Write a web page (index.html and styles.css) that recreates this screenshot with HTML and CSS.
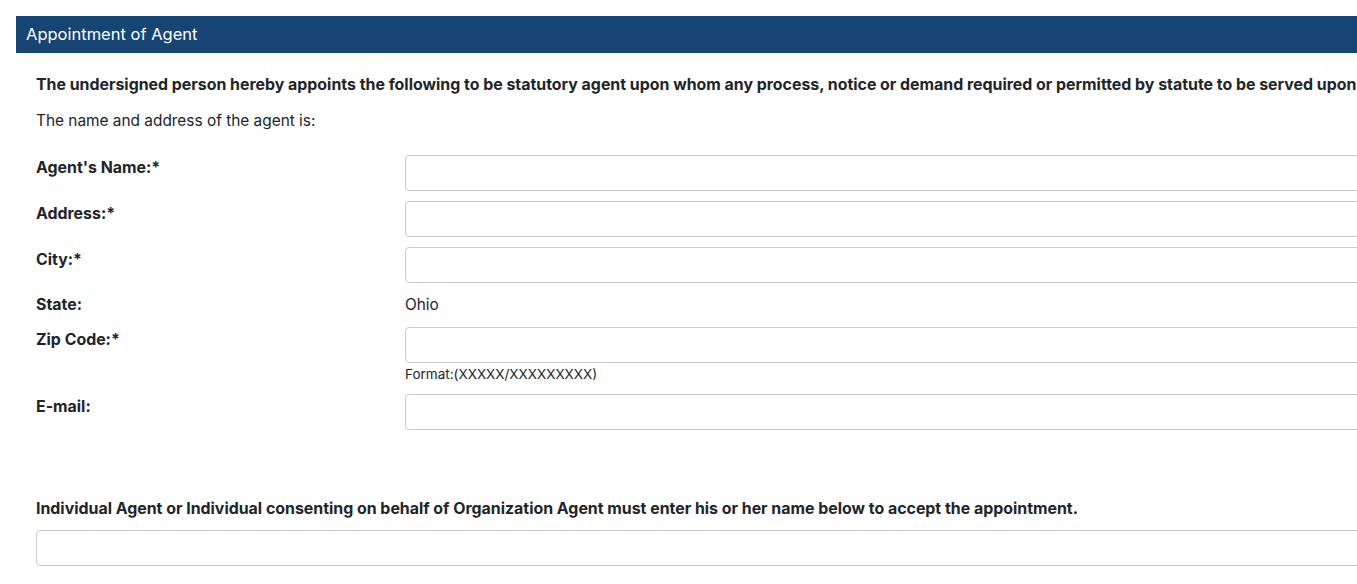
FILE: index.html
```html
<!DOCTYPE html>
<html lang="en">
<head>
<meta charset="utf-8">
<title>Appointment of Agent</title>
<link rel="stylesheet" href="styles.css">
</head>
<body>
<div class="page">
  <div class="panel-heading">Appointment of Agent</div>
  <div class="panel-body">
    <p class="lead">The undersigned person hereby appoints the following to be statutory agent upon whom any process, notice or demand required or permitted by statute to be served upon</p>
    <p class="intro">The name and address of the agent is:</p>
    <div class="form-grid">
      <label class="lbl">Agent's Name:*</label>
      <div class="field"><input class="input" type="text"></div>

      <label class="lbl">Address:*</label>
      <div class="field"><input class="input" type="text"></div>

      <label class="lbl">City:*</label>
      <div class="field"><input class="input" type="text"></div>

      <label class="lbl lbl-static">State:</label>
      <div class="field static">Ohio</div>

      <label class="lbl">Zip Code:*</label>
      <div class="field"><input class="input" type="text"><div class="hint">Format:(XXXXX/XXXXXXXXX)</div></div>

      <label class="lbl">E-mail:</label>
      <div class="field"><input class="input" type="text"></div>
    </div>
    <p class="consent">Individual Agent or Individual consenting on behalf of Organization Agent must enter his or her name below to accept the appointment.</p>
    <input class="input full" type="text">
  </div>
</div>
</body>
</html>
```
FILE: styles.css
```css
html, body {
  margin: 0;
  padding: 0;
  overflow: hidden;
  background: #fff;
}
body {
  font-family: Inter, "Liberation Sans", Arial, sans-serif;
  color: #212529;
}
.page {
  margin: 16px 0 0 16px;
  width: 1700px;
}
.panel-heading {
  background: #164473;
  color: #fff;
  font-size: 16.5px;
  height: 37px;
  line-height: 37px;
  padding: 0 10px;
}
.panel-body {
  padding: 21px 20px 20px 20px;
}
.lead {
  margin: 0;
  font-size: 15.9px;
  font-weight: 700;
  line-height: 22px;
  white-space: nowrap;
}
.intro {
  margin: 14px 0 0 0;
  font-size: 15.4px;
  line-height: 22px;
}
.form-grid {
  display: grid;
  grid-template-columns: 369px 1fr;
  row-gap: 10px;
  margin-top: 23px;
}
.lbl {
  font-size: 15.9px;
  font-weight: 700;
  line-height: 22px;
  padding-top: 2px;
}
.lbl-static {
  padding-top: 0;
  line-height: 24px;
}
.field.static {
  font-size: 15.4px;
  line-height: 24px;
}
.input {
  display: block;
  box-sizing: border-box;
  width: 100%;
  height: 36px;
  border: 1px solid #ccc;
  border-radius: 4px;
  background: #fff;
  margin: 0;
  padding: 6px 12px;
  font: inherit;
}
.hint {
  font-size: 13.5px;
  line-height: 15px;
  margin: 4px 0 2px 0;
}
.consent {
  margin: 68px 0 0 0;
  font-size: 15.9px;
  font-weight: 700;
  line-height: 22px;
  white-space: nowrap;
}
.full {
  margin-top: 10px;
}
```
